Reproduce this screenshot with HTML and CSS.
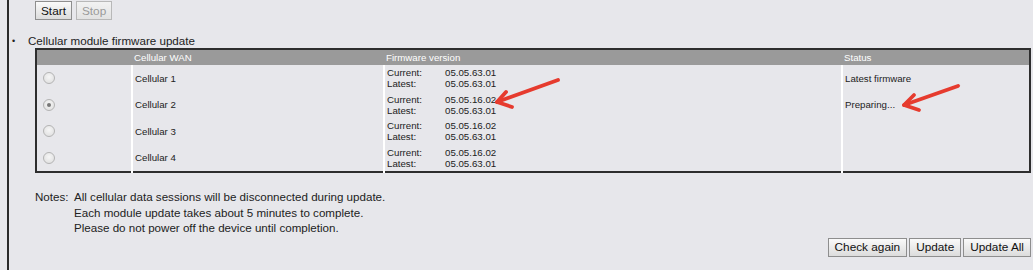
FILE: index.html
```html
<!DOCTYPE html>
<html lang="en">
<head>
    <meta charset="UTF-8">
    <title>Cellular module firmware update</title>
    <link rel="stylesheet" href="styles.css">
</head>
<body>
    <div class="page">
        <div class="top-buttons">
            <button class="btn">Start</button>
            <button class="btn" disabled>Stop</button>
        </div>

        <div class="section-title">
            <span class="bullet">&bull;</span>
            <span>Cellular module firmware update</span>
        </div>

        <table class="fw-table">
            <thead>
                <tr>
                    <th class="col-radio"></th>
                    <th class="col-wan">Cellular WAN</th>
                    <th class="col-fw">Firmware version</th>
                    <th class="col-status">Status</th>
                </tr>
            </thead>
            <tbody>
                <tr>
                    <td class="col-radio"><input type="radio" name="module" class="radio"></td>
                    <td>Cellular 1</td>
                    <td>
                        <div class="fw-line"><span class="fw-label">Current:</span>05.05.63.01</div>
                        <div class="fw-line"><span class="fw-label">Latest:</span>05.05.63.01</div>
                    </td>
                    <td>Latest firmware</td>
                </tr>
                <tr>
                    <td class="col-radio"><input type="radio" name="module" class="radio" checked></td>
                    <td>Cellular 2</td>
                    <td>
                        <div class="fw-line"><span class="fw-label">Current:</span>05.05.16.02</div>
                        <div class="fw-line"><span class="fw-label">Latest:</span>05.05.63.01</div>
                    </td>
                    <td>Preparing...</td>
                </tr>
                <tr>
                    <td class="col-radio"><input type="radio" name="module" class="radio"></td>
                    <td>Cellular 3</td>
                    <td>
                        <div class="fw-line"><span class="fw-label">Current:</span>05.05.16.02</div>
                        <div class="fw-line"><span class="fw-label">Latest:</span>05.05.63.01</div>
                    </td>
                    <td></td>
                </tr>
                <tr>
                    <td class="col-radio"><input type="radio" name="module" class="radio"></td>
                    <td>Cellular 4</td>
                    <td>
                        <div class="fw-line"><span class="fw-label">Current:</span>05.05.16.02</div>
                        <div class="fw-line"><span class="fw-label">Latest:</span>05.05.63.01</div>
                    </td>
                    <td></td>
                </tr>
            </tbody>
        </table>

        <div class="notes">
            <span class="notes-label">Notes:</span>
            <div class="notes-text">
                <div>All cellular data sessions will be disconnected during update.</div>
                <div>Each module update takes about 5 minutes to complete.</div>
                <div>Please do not power off the device until completion.</div>
            </div>
        </div>

        <div class="bottom-buttons">
            <button class="btn">Check again</button>
            <button class="btn">Update</button>
            <button class="btn">Update All</button>
        </div>
    </div>

    <!-- annotation arrows drawn over the screenshot -->
    <svg class="arrows" width="1033" height="270" viewBox="0 0 1033 270">
        <g fill="none" stroke="#e63b2e" stroke-width="3.8" stroke-linecap="round" stroke-linejoin="round">
            <path d="M558 80 L497 102"/>
            <path d="M506 92 L497 102 L512 107"/>
            <path d="M958 86 L904 105"/>
            <path d="M914 95 L904 105 L919 110"/>
        </g>
    </svg>
</body>
</html>
```

FILE: styles.css
```css
body {
    font-family: 'Liberation Sans', Arial, sans-serif;
    margin: 0;
    padding: 0;
    background-color: #e7e7eb;
    color: #222;
}

.page {
    position: relative;
    margin-left: 7px;
    margin-right: 2px;
    border-left: 2px solid #2a2a2a;
    padding-left: 26px;
    min-height: 270px;
    box-sizing: border-box;
}

.btn {
    font-family: 'Liberation Sans', Arial, sans-serif;
    font-size: 11.8px;
    color: #111;
    height: 19px;
    padding: 0 6px;
    border: 1px solid #8e8e8e;
    border-radius: 0;
    background: linear-gradient(#fafafa, #dcdcdc);
    margin: 0;
}

.btn:disabled {
    color: #9a9a9a;
    border-color: #b8b8b8;
    background: linear-gradient(#f2f2f2, #e2e2e2);
}

.top-buttons {
    display: flex;
    gap: 4px;
    padding-top: 1px;
}

.top-buttons .btn {
    padding: 0 5px;
}

.section-title {
    display: flex;
    align-items: center;
    margin-left: -23px;
    margin-top: 14px;
    font-size: 11.6px;
    line-height: 14px;
}

.bullet {
    width: 16px;
    font-size: 9px;
}

.fw-table {
    width: 100%;
    border-collapse: collapse;
    border: 2px solid #2e2e2e;
    font-size: 9.7px;
}

.fw-table th {
    background-color: #9a9a9a;
    color: #fff;
    font-weight: normal;
    text-align: left;
    height: 15px;
    padding: 0 2px;
    line-height: 15px;
}

.fw-table td {
    height: 26.5px;
    padding: 0 2px;
    vertical-align: middle;
    border-left: 2px solid #fff;
}

.fw-table td:first-child {
    border-left: none;
}

.col-radio {
    width: 90px;
}

.col-wan {
    width: 248px;
}

.col-fw {
    width: 454px;
}

.fw-line {
    line-height: 11px;
}

.fw-label {
    display: inline-block;
    width: 58px;
}

.radio {
    appearance: none;
    -webkit-appearance: none;
    width: 12px;
    height: 12px;
    margin: 0 0 0 4px;
    border: 1px solid #b4b4b4;
    border-radius: 50%;
    background: radial-gradient(circle at 50% 40%, #f6f6f6, #dcdcdc);
    display: block;
    box-sizing: border-box;
    position: relative;
}

.radio:checked::after {
    content: '';
    position: absolute;
    left: 3px;
    top: 3px;
    width: 4px;
    height: 4px;
    border-radius: 50%;
    background-color: #777;
}

.notes {
    display: flex;
    margin-top: 16px;
    font-size: 11.6px;
    line-height: 15.5px;
}

.notes-label {
    width: 39px;
}

.bottom-buttons {
    display: flex;
    justify-content: flex-end;
    gap: 2px;
    margin-top: 2px;
}

.arrows {
    position: absolute;
    top: 0;
    left: 0;
    pointer-events: none;
}
```
